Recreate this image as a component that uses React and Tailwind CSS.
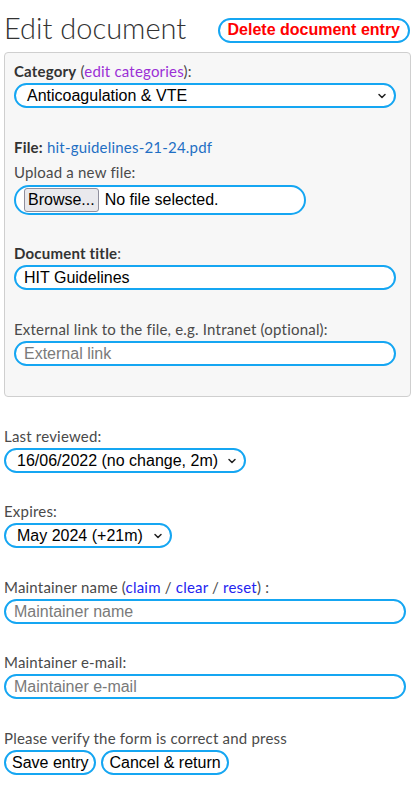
import { ChevronDown } from "lucide-react";

const labelFont = { fontFamily: "Lato, 'Open Sans', sans-serif" };

const Label = ({ children }) => (
  <div className="text-[15px] leading-5 tracking-[0.2px] text-[#4a4a4a] font-['Lato',sans-serif]">
    {children}
  </div>
);

const Select = ({ value, width }) => (
  <div
    className={`mt-0.5 h-[25px] ${width} flex items-center justify-between rounded-full border-2 border-[#15a6f2] bg-white pl-[11px] pr-[6px] font-['Liberation_Sans',Arial,sans-serif] text-[16px] text-black`}
  >
    <span>{value}</span>
    <ChevronDown className="h-3 w-3 text-[#222]" strokeWidth={3} />
  </div>
);

const TextInput = ({ value, placeholder, width }) => (
  <div
    className={`mt-0.5 h-[25px] ${width} flex items-center rounded-full border-2 border-[#15a6f2] bg-white pl-[8px] font-['Liberation_Sans',Arial,sans-serif] text-[16px]`}
  >
    {value ? (
      <span className="text-black">{value}</span>
    ) : (
      <span className="text-[#7a7a7a]">{placeholder}</span>
    )}
  </div>
);

const Button = ({ children }) => (
  <button className="h-[25px] rounded-full border-2 border-[#15a6f2] bg-white px-[6px] font-['Liberation_Sans',Arial,sans-serif] text-[16px] leading-none text-black">
    {children}
  </button>
);

export default function App() {
  return (
    <div className="min-h-screen bg-white pl-1 pt-[10px] pb-6" style={labelFont}>
      <div className="flex items-center justify-between w-[406px]">
        <h1 className="text-[29px] leading-[36px] font-light text-[#333] font-['Lato',sans-serif]">
          Edit document
        </h1>
        <button className="h-[25px] mt-[4px] rounded-full border-2 border-[#15a6f2] bg-white px-[8px] font-['Liberation_Sans',Arial,sans-serif] text-[16px] font-bold leading-none text-[#ff0000]">
          Delete document entry
        </button>
      </div>

      <div className="mt-[6px] w-[407px] rounded border border-[#cfcfcf] bg-[#f7f7f7] pl-[9px] pr-[14px] pt-2 pb-[30px]">
        <Label>
          <b className="font-bold text-[#333]">Category</b> (
          <a className="text-[#9b30d6]">edit categories</a>):
        </Label>
        <Select value="Anticoagulation & VTE" width="w-full" />

        <div className="mt-[29px]">
          <Label>
            <b className="font-bold text-[#333]">File:</b>{" "}
            <a className="text-[#1f6fc4]">hit-guidelines-21-24.pdf</a>
          </Label>
        </div>
        <div className="mt-[5px]">
          <Label>Upload a new file:</Label>
        </div>
        <div className="mt-[3px] h-[30px] w-[292px] flex items-center gap-[6px] rounded-full border-2 border-[#15a6f2] bg-white pl-[8px] font-['Liberation_Sans',Arial,sans-serif] text-[16px] text-black">
          <span className="h-[24px] flex items-center rounded-[3px] border border-[#8f8f9d] bg-[#e9e9ed] px-[3px]">
            Browse...
          </span>
          <span>No file selected.</span>
        </div>

        <div className="mt-[28px]">
          <Label>
            <b className="font-bold text-[#333]">Document title</b>:
          </Label>
        </div>
        <TextInput value="HIT Guidelines" width="w-full" />

        <div className="mt-[29px]">
          <Label>External link to the file, e.g. Intranet (optional):</Label>
        </div>
        <TextInput placeholder="External link" width="w-full" />
      </div>

      <div className="mt-[29px]">
        <Label>Last reviewed:</Label>
        <Select value="16/06/2022 (no change, 2m)" width="w-[242px]" />
      </div>

      <div className="mt-[28px]">
        <Label>Expires:</Label>
        <Select value="May 2024 (+21m)" width="w-[168px]" />
      </div>

      <div className="mt-[29px]">
        <Label>
          Maintainer name (<a className="text-[#2424f0]">claim</a> /{" "}
          <a className="text-[#2424f0]">clear</a> / <a className="text-[#2424f0]">reset</a>) :
        </Label>
        <TextInput placeholder="Maintainer name" width="w-[402px]" />
      </div>

      <div className="mt-[28px]">
        <Label>Maintainer e-mail:</Label>
        <TextInput placeholder="Maintainer e-mail" width="w-[402px]" />
      </div>

      <div className="mt-[29px]">
        <Label>Please verify the form is correct and press</Label>
        <div className="mt-0.5 flex gap-[5px]">
          <Button>Save entry</Button>
          <Button>Cancel &amp; return</Button>
        </div>
      </div>
    </div>
  );
}
